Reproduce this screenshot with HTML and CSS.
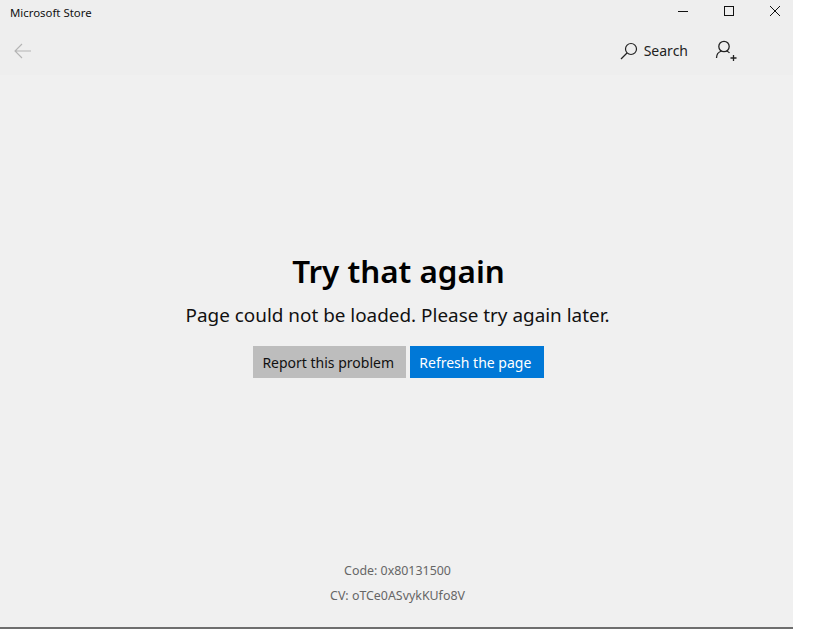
FILE: index.html
```html
<!DOCTYPE html>
<html lang="en">
<head>
<meta charset="utf-8">
<title>Microsoft Store</title>
<link rel="stylesheet" href="styles.css">
</head>
<body>
<div class="window">
  <header class="chrome">
    <div class="titlebar">
      <span class="app-title">Microsoft Store</span>
      <div class="window-controls">
        <svg class="ctl" width="46" height="24" viewBox="0 0 46 24"><path d="M18 11.500h10" stroke="#111" fill="none"/></svg>
        <svg class="ctl" width="46" height="24" viewBox="0 0 46 24"><rect x="18.500" y="6.500" width="9" height="9" stroke="#111" fill="none"/></svg>
        <svg class="ctl" width="46" height="24" viewBox="0 0 46 24"><path d="M18 6l10 10M28 6l-10 10" stroke="#111" fill="none"/></svg>
      </div>
    </div>
    <div class="toolbar">
      <svg class="back" width="18" height="16" viewBox="0 0 18 16"><path d="M8 1L1 8l7 7M1 8h16" stroke="#b4b4b4" stroke-width="1.1" fill="none"/></svg>
      <div class="tools">
        <div class="search">
          <svg width="18" height="18" viewBox="0 0 18 18"><circle cx="11" cy="7" r="5.500" stroke="#222" stroke-width="1.2" fill="none"/><path d="M7 11l-6 6" stroke="#222" stroke-width="1.3" fill="none"/></svg>
          <span>Search</span>
        </div>
        <svg class="user" width="22" height="22" viewBox="0 0 22 22"><circle cx="9" cy="6.500" r="5.200" stroke="#222" stroke-width="1.3" fill="none"/><path d="M1.500 18c0-4 2.500-6.200 5-7M11.500 11c1.200.4 2.300 1 3 2" stroke="#222" stroke-width="1.3" fill="none"/><path d="M15.500 18h6M18.500 15v6" stroke="#222" stroke-width="1.3" fill="none"/></svg>
      </div>
    </div>
  </header>
  <main class="content">
    <div class="message">
      <h1 class="heading">Try that again</h1>
      <p class="detail">Page could not be loaded. Please try again later.</p>
      <div class="actions">
        <button class="btn btn-secondary">Report this problem</button>
        <button class="btn btn-primary">Refresh the page</button>
      </div>
    </div>
    <footer class="codes">
      <p>Code: 0x80131500</p>
      <p>CV: oTCe0ASvykKUfo8V</p>
    </footer>
  </main>
</div>
</body>
</html>
```
FILE: styles.css
```css
html, body { margin: 0; padding: 0; background: #fff; }
body { font-family: "Noto Sans", "Open Sans", sans-serif; color: #000; overflow: hidden; }
.window { width: 793px; height: 629px; box-sizing: border-box; background: #f0f0f0; border-bottom: 2px solid #6e6e6e; display: flex; flex-direction: column; }
.chrome { height: 75px; background: #eeeeee; flex: none; }
.titlebar { height: 24px; display: flex; justify-content: space-between; align-items: center; }
.app-title { font-size: 11.4px; margin-left: 10px; color: #111; }
.window-controls { display: flex; margin-right: -5px; }
.ctl { display: block; }
.toolbar { height: 51px; display: flex; justify-content: space-between; align-items: center; padding: 2px 56px 0 14px; box-sizing: border-box; }
.tools { display: flex; align-items: center; gap: 27px; }
.search { display: flex; align-items: center; gap: 6px; font-size: 14px; color: #222; }
.content { flex: 1; display: flex; flex-direction: column; align-items: center; padding-left: 2px; }
.message { margin-top: 174px; display: flex; flex-direction: column; align-items: center; }
.heading { margin: 0 0 0 2px; font-size: 31.4px; line-height: 44px; font-weight: 600; }
.detail { margin: 8px 0 0; font-size: 18.9px; line-height: 28px; color: #111; }
.actions { display: flex; gap: 4px; margin: 17px 0 0 2px; }
.btn { border: 0; height: 32px; padding: 0 12.3px 0 9px; font: inherit; font-size: 14px; }
.btn-secondary { background: #bdbdbd; color: #111; }
.btn-primary { background: #0078d7; color: #fff; }
.codes { margin-top: auto; margin-bottom: 15px; text-align: center; font-size: 12.4px; color: #666; }
.codes p { margin: 0 0 8px; line-height: 17px; }
```
